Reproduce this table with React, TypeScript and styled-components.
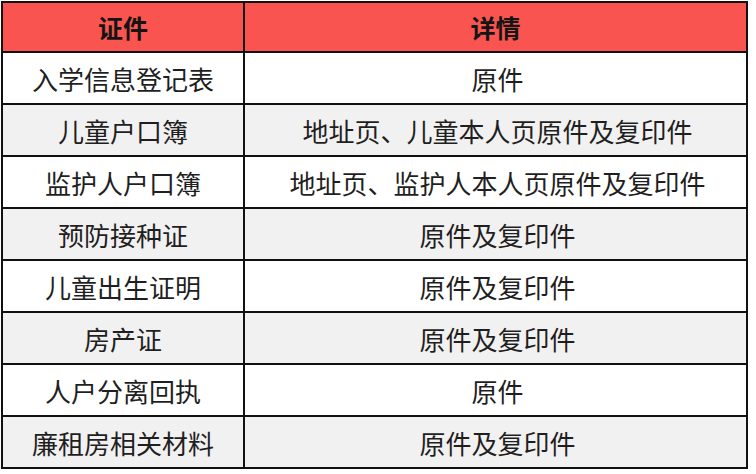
import { Fragment } from 'react';
import styled, { createGlobalStyle } from 'styled-components';

const GlobalStyle = createGlobalStyle`
  html, body {
    margin: 0;
    padding: 0;
    background: #ffffff;
  }
  body {
    font-family: 'Noto Sans CJK SC', 'Noto Sans', sans-serif;
  }
`;

const Page = styled.div`
  padding: 1px 0 0 1px;
`;

const Grid = styled.div`
  display: grid;
  grid-template-columns: 240px 1fr;
  grid-template-rows: 48px repeat(8, 50px);
  gap: 2px;
  width: 747px;
  box-sizing: border-box;
  padding: 2px;
  background: #111111;
`;

const HeadCell = styled.div`
  display: flex;
  align-items: center;
  justify-content: center;
  background: #f9544f;
  color: #141414;
  font-size: 25px;
  font-weight: 700;
`;

const Cell = styled.div<{ $shade: boolean; $offset?: boolean }>`
  display: flex;
  align-items: center;
  justify-content: center;
  background: ${(p) => (p.$shade ? '#f2f1f1' : '#ffffff')};
  color: #1f1f1f;
  font-size: 26px;
  font-weight: 400;
  white-space: nowrap;
  padding-left: ${(p) => (p.$offset ? '4px' : '0')};
`;

const rows: [string, string][] = [
  ['入学信息登记表', '原件'],
  ['儿童户口簿', '地址页、儿童本人页原件及复印件'],
  ['监护人户口簿', '地址页、监护人本人页原件及复印件'],
  ['预防接种证', '原件及复印件'],
  ['儿童出生证明', '原件及复印件'],
  ['房产证', '原件及复印件'],
  ['人户分离回执', '原件'],
  ['廉租房相关材料', '原件及复印件'],
];

export default function App() {
  return (
    <Page>
      <GlobalStyle />
      <Grid>
        <HeadCell>证件</HeadCell>
        <HeadCell>详情</HeadCell>
        {rows.map(([name, detail], i) => (
          <Fragment key={name}>
            <Cell $shade={i % 2 === 1}>{name}</Cell>
            <Cell $shade={i % 2 === 1} $offset>
              {detail}
            </Cell>
          </Fragment>
        ))}
      </Grid>
    </Page>
  );
}
